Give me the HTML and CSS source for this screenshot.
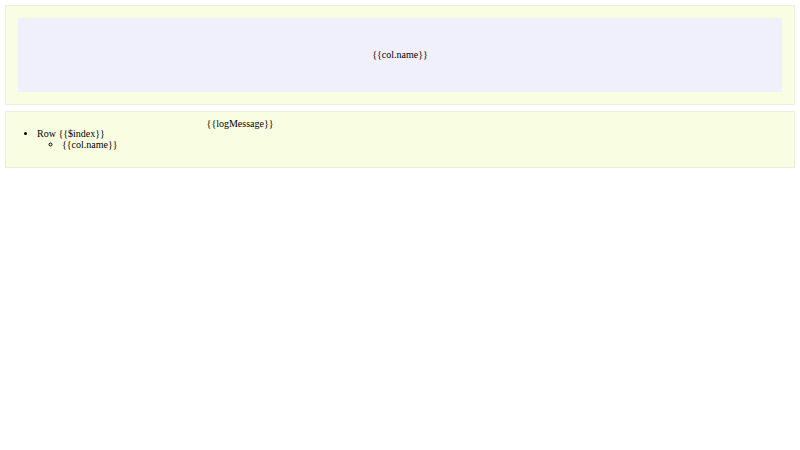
FILE: index.html
```html
<!DOCTYPE html>
<html>
<head>
<meta charset="utf-8">
<link rel="stylesheet" href="styles.css">
</head>
<body>
<div class="page">
  <div class="panel grid-panel">
    <div class="cell">{{col.name}}</div>
  </div>
  <div class="panel log-panel">
    <ul class="rows">
      <li>Row {{$index}}
        <ul class="cols">
          <li>{{col.name}}</li>
        </ul>
      </li>
    </ul>
    <div class="log">{{logMessage}}</div>
  </div>
</div>
</body>
</html>
```
FILE: styles.css
```css
html, body {
  margin: 0;
  padding: 0;
  background: #ffffff;
}
body {
  font-family: "Liberation Serif", "Times New Roman", serif;
  font-size: 10px;
  color: #000;
}
.page {
  display: flex;
  flex-direction: column;
  gap: 6px;
  padding: 5px;
}
.panel {
  background: #f9fee2;
  border: 1px solid #ebeee0;
}
.grid-panel {
  padding: 12px;
}
.cell {
  height: 72px;
  padding-bottom: 2px;
  background: #f0f0fd;
  display: flex;
  align-items: center;
  justify-content: center;
}
.log-panel {
  display: flex;
  align-items: flex-start;
  padding: 6px 6px 7px;
}
.rows {
  margin: 10px 0;
  padding-left: 25px;
}
.cols {
  margin: 0;
  padding-left: 25px;
}
.log {
  margin-left: 89px;
}
```
